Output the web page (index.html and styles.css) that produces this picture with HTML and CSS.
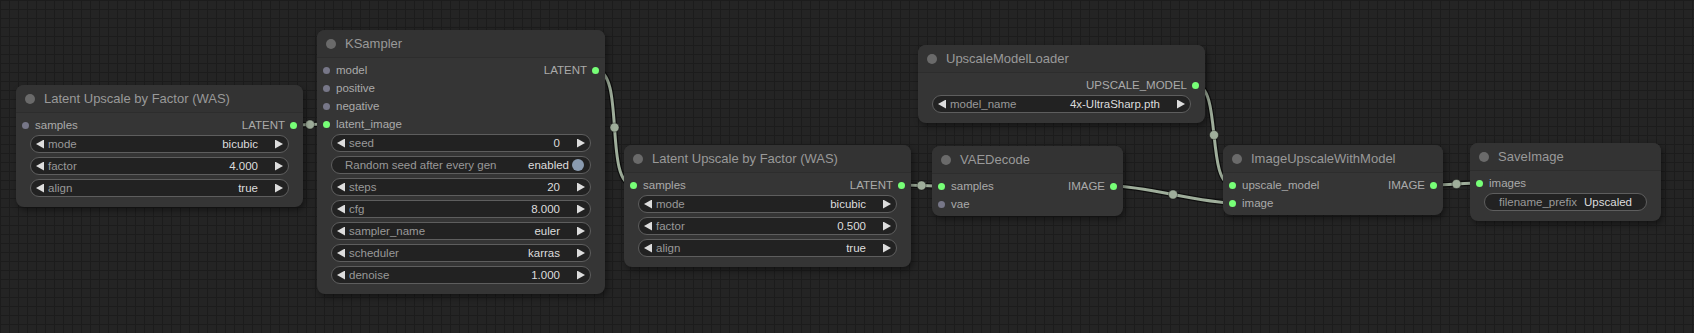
FILE: index.html
```html
<!DOCTYPE html>
<html lang="en">
  <head>
    <meta charset="UTF-8">
    <title>Workflow</title>
    <link rel="stylesheet" href="styles.css">
  </head>
<body>
  <div class="lienzo">

    <svg class="enlaces" width="1694" height="333" viewBox="0 0 1694 333">
      <g class="sombra">
        <path d="M293.5,125 C301.5,125 318.5,124 326.5,124"/>
        <path d="M595.5,70 C625.8,70 603.2,185 633.5,185"/>
        <path d="M901.5,185 C911.5,185 931.5,186 941.5,186"/>
        <path d="M1113.5,186 C1143.5,186 1202.5,203 1232.5,203"/>
        <path d="M1195.5,85 C1222.2,85 1205.8,185 1232.5,185"/>
        <path d="M1433.5,185 C1445,185 1468,183 1479.5,183"/>
      </g>
      <g class="linea">
        <path d="M293.5,125 C301.5,125 318.5,124 326.5,124"/>
        <path d="M595.5,70 C625.8,70 603.2,185 633.5,185"/>
        <path d="M901.5,185 C911.5,185 931.5,186 941.5,186"/>
        <path d="M1113.5,186 C1143.5,186 1202.5,203 1232.5,203"/>
        <path d="M1195.5,85 C1222.2,85 1205.8,185 1232.5,185"/>
        <path d="M1433.5,185 C1445,185 1468,183 1479.5,183"/>
      </g>
      <g class="centro">
        <circle cx="310" cy="124.5" r="4.5"/>
        <circle cx="614.5" cy="127.5" r="4.5"/>
        <circle cx="921.5" cy="185.5" r="4.5"/>
        <circle cx="1173" cy="194.5" r="4.5"/>
        <circle cx="1214" cy="135" r="4.5"/>
        <circle cx="1456.5" cy="184" r="4.5"/>
      </g>
    </svg>

    <!-- Latent Upscale 4x -->
    <div class="nodo nodo-escala1">
      <div class="titulo"><span class="punto"></span>Latent Upscale by Factor (WAS)</div>
      <div class="cuerpo">
        <div class="fila">
          <span class="entrada"><i class="ranura"></i>samples</span>
          <span class="salida">LATENT<i class="ranura on"></i></span>
        </div>
        <div class="widgets">
          <div class="widget combo"><i class="flecha izq"></i><span class="etiqueta">mode</span><span class="valor">bicubic</span><i class="flecha der"></i></div>
          <div class="widget combo"><i class="flecha izq"></i><span class="etiqueta">factor</span><span class="valor">4.000</span><i class="flecha der"></i></div>
          <div class="widget combo"><i class="flecha izq"></i><span class="etiqueta">align</span><span class="valor">true</span><i class="flecha der"></i></div>
        </div>
      </div>
    </div>

    <!-- KSampler -->
    <div class="nodo nodo-ksampler">
      <div class="titulo"><span class="punto"></span>KSampler</div>
      <div class="cuerpo">
        <div class="fila">
          <span class="entrada"><i class="ranura"></i>model</span>
          <span class="salida">LATENT<i class="ranura on"></i></span>
        </div>
        <div class="fila"><span class="entrada"><i class="ranura"></i>positive</span></div>
        <div class="fila"><span class="entrada"><i class="ranura"></i>negative</span></div>
        <div class="fila"><span class="entrada"><i class="ranura on"></i>latent_image</span></div>
        <div class="widgets">
          <div class="widget combo"><i class="flecha izq"></i><span class="etiqueta">seed</span><span class="valor">0</span><i class="flecha der"></i></div>
          <div class="widget toggle"><span class="etiqueta">Random seed after every gen</span><span class="valor">enabled</span><i class="bola"></i></div>
          <div class="widget combo"><i class="flecha izq"></i><span class="etiqueta">steps</span><span class="valor">20</span><i class="flecha der"></i></div>
          <div class="widget combo"><i class="flecha izq"></i><span class="etiqueta">cfg</span><span class="valor">8.000</span><i class="flecha der"></i></div>
          <div class="widget combo"><i class="flecha izq"></i><span class="etiqueta">sampler_name</span><span class="valor">euler</span><i class="flecha der"></i></div>
          <div class="widget combo"><i class="flecha izq"></i><span class="etiqueta">scheduler</span><span class="valor">karras</span><i class="flecha der"></i></div>
          <div class="widget combo"><i class="flecha izq"></i><span class="etiqueta">denoise</span><span class="valor">1.000</span><i class="flecha der"></i></div>
        </div>
      </div>
    </div>

    <!-- Latent Upscale 0.5x -->
    <div class="nodo nodo-escala2">
      <div class="titulo"><span class="punto"></span>Latent Upscale by Factor (WAS)</div>
      <div class="cuerpo">
        <div class="fila">
          <span class="entrada"><i class="ranura on"></i>samples</span>
          <span class="salida">LATENT<i class="ranura on"></i></span>
        </div>
        <div class="widgets">
          <div class="widget combo"><i class="flecha izq"></i><span class="etiqueta">mode</span><span class="valor">bicubic</span><i class="flecha der"></i></div>
          <div class="widget combo"><i class="flecha izq"></i><span class="etiqueta">factor</span><span class="valor">0.500</span><i class="flecha der"></i></div>
          <div class="widget combo"><i class="flecha izq"></i><span class="etiqueta">align</span><span class="valor">true</span><i class="flecha der"></i></div>
        </div>
      </div>
    </div>

    <!-- UpscaleModelLoader -->
    <div class="nodo nodo-cargador">
      <div class="titulo"><span class="punto"></span>UpscaleModelLoader</div>
      <div class="cuerpo">
        <div class="fila">
          <span class="entrada"></span>
          <span class="salida">UPSCALE_MODEL<i class="ranura on"></i></span>
        </div>
        <div class="widgets">
          <div class="widget combo"><i class="flecha izq"></i><span class="etiqueta">model_name</span><span class="valor">4x-UltraSharp.pth</span><i class="flecha der"></i></div>
        </div>
      </div>
    </div>

    <!-- VAEDecode -->
    <div class="nodo nodo-vae">
      <div class="titulo"><span class="punto"></span>VAEDecode</div>
      <div class="cuerpo">
        <div class="fila">
          <span class="entrada"><i class="ranura on"></i>samples</span>
          <span class="salida">IMAGE<i class="ranura on"></i></span>
        </div>
        <div class="fila"><span class="entrada"><i class="ranura"></i>vae</span></div>
      </div>
    </div>

    <!-- ImageUpscaleWithModel -->
    <div class="nodo nodo-upscale">
      <div class="titulo"><span class="punto"></span>ImageUpscaleWithModel</div>
      <div class="cuerpo">
        <div class="fila">
          <span class="entrada"><i class="ranura on"></i>upscale_model</span>
          <span class="salida">IMAGE<i class="ranura on"></i></span>
        </div>
        <div class="fila"><span class="entrada"><i class="ranura on"></i>image</span></div>
      </div>
    </div>

    <!-- SaveImage -->
    <div class="nodo nodo-guardar">
      <div class="titulo"><span class="punto"></span>SaveImage</div>
      <div class="cuerpo">
        <div class="fila"><span class="entrada"><i class="ranura on"></i>images</span></div>
        <div class="widgets">
          <div class="widget texto"><span class="etiqueta">filename_prefix</span><span class="valor">Upscaled</span></div>
        </div>
      </div>
    </div>

  </div>
</body>
</html>
```

FILE: styles.css
```css
  :root {
    --color-fondo: #242424;
    --color-rejilla: #1c1c1c;
    --color-nodo: #353535;
    --color-titulo: #333333;
    --color-widget: #222222;
    --color-borde: #5e5e5e;
    --color-texto: #aaaaaa;
    --color-secundario: #999999;
    --color-valor: #dddddd;
    --color-conectado: #77ff77;
    --color-libre: #778;
    --color-enlace: #9fae9b;
  }

  body {
    margin: 0;
    background-color: var(--color-fondo);
    font-family: 'Liberation Sans', Arial, sans-serif;
  }

  .lienzo {
    position: relative;
    width: 1694px;
    height: 333px;
    overflow: hidden;
    background-color: var(--color-fondo);
    background-image:
      linear-gradient(to right, var(--color-rejilla) 1px, transparent 1px),
      linear-gradient(to bottom, var(--color-rejilla) 1px, transparent 1px);
    background-size: 9px 9px;
  }

  .enlaces {
    position: absolute;
    left: 0;
    top: 0;
  }

  .enlaces path {
    fill: none;
  }

  .sombra path {
    stroke: rgba(0,0,0,0.6);
    stroke-width: 5.5;
  }

  .linea path {
    stroke: var(--color-enlace);
    stroke-width: 3;
  }

  .centro circle {
    fill: var(--color-enlace);
    stroke: rgba(0,0,0,0.35);
    stroke-width: 1;
  }

  /* nodos: su sitio en el lienzo es el contenido */
  .nodo {
    position: absolute;
    background: var(--color-nodo);
    border-radius: 8px;
    box-shadow: 2px 3px 6px rgba(0,0,0,0.45);
    color: var(--color-texto);
    font-size: 11.5px;
  }

  .nodo-escala1 { left: 16px;   top: 85px;  width: 287px; }
  .nodo-ksampler { left: 317px; top: 30px;  width: 288px; }
  .nodo-escala2 { left: 624px;  top: 145px; width: 287px; }
  .nodo-cargador { left: 918px; top: 45px;  width: 287px; }
  .nodo-vae     { left: 932px;  top: 146px; width: 191px; }
  .nodo-upscale { left: 1223px; top: 145px; width: 220px; }
  .nodo-guardar { left: 1470px; top: 143px; width: 191px; }

  .titulo {
    height: 27px;
    display: flex;
    align-items: center;
    gap: 9px;
    padding-left: 9px;
    background: var(--color-titulo);
    border-bottom: 1px solid #2d2d2d;
    border-radius: 8px 8px 0 0;
    color: var(--color-secundario);
    font-size: 13px;
    white-space: nowrap;
  }

  .punto {
    width: 10px;
    height: 10px;
    border-radius: 50%;
    background: #6a6a6a;
    flex: none;
  }

  .cuerpo {
    padding: 3px 0 3px;
  }

  .fila {
    height: 18px;
    display: flex;
    justify-content: space-between;
    align-items: center;
    padding: 0 6px;
  }

  .entrada, .salida {
    display: flex;
    align-items: center;
    gap: 6px;
    white-space: nowrap;
  }

  .salida {
    gap: 5px;
  }

  .ranura {
    width: 7px;
    height: 7px;
    border-radius: 50%;
    background: var(--color-libre);
  }

  .ranura.on {
    background: var(--color-conectado);
  }

  .widgets {
    display: flex;
    flex-direction: column;
    gap: 4px;
    padding: 1px 14px 7px;
  }

  .widget {
    height: 18px;
    box-sizing: border-box;
    display: flex;
    align-items: center;
    background: var(--color-widget);
    border: 1px solid var(--color-borde);
    border-radius: 9px;
    white-space: nowrap;
  }

  .etiqueta {
    color: var(--color-secundario);
  }

  .valor {
    flex: 1;
    text-align: right;
    color: var(--color-valor);
  }

  .combo {
    padding: 0 5px;
  }

  .combo .etiqueta {
    margin-left: 4px;
  }

  .combo .valor {
    margin-right: 17px;
  }

  .flecha {
    width: 8px;
    height: 9px;
    background: var(--color-valor);
    flex: none;
  }

  .flecha.izq {
    clip-path: polygon(0 50%, 100% 0, 100% 100%);
  }

  .flecha.der {
    clip-path: polygon(0 0, 100% 50%, 0 100%);
  }

  .toggle {
    padding: 0 6px 0 13px;
  }

  .toggle .valor {
    margin-right: 3px;
  }

  .bola {
    width: 12px;
    height: 12px;
    border-radius: 50%;
    background: #8a9bb0;
  }

  .texto {
    padding: 0 14px;
  }
```
